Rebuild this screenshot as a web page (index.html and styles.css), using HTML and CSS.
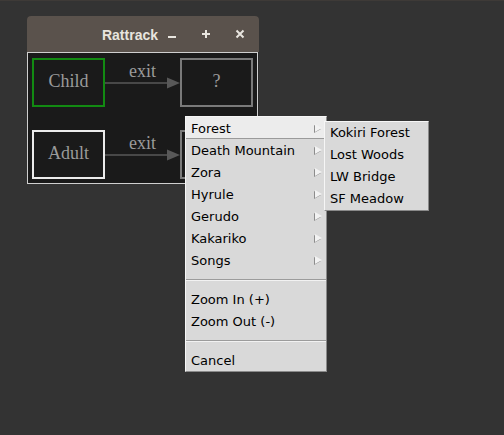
FILE: index.html
```html
<!DOCTYPE html>
<html lang="en">
<head>
    <meta charset="UTF-8">
    <title>Rattrack</title>
    <link rel="stylesheet" href="styles.css">
</head>
<body>
    <div class="window">
        <div class="titlebar">
            <span class="title">Rattrack</span>
            <span class="tb-btn">
                <svg width="10" height="10" viewBox="0 0 10 10"><rect x="1" y="7" width="8" height="2" fill="#e8e5df"/></svg>
            </span>
            <span class="tb-btn">
                <svg width="10" height="10" viewBox="0 0 10 10"><rect x="1" y="4" width="8" height="2" fill="#e8e5df"/><rect x="4" y="1" width="2" height="8" fill="#e8e5df"/></svg>
            </span>
            <span class="tb-btn">
                <svg width="10" height="10" viewBox="0 0 10 10"><path d="M1.5 1.5 L8.5 8.5 M8.5 1.5 L1.5 8.5" stroke="#e8e5df" stroke-width="2"/></svg>
            </span>
        </div>
        <div class="frame">
            <div class="row">
                <div class="node current">Child</div>
                <div class="edge">
                    <span class="edge-label">exit</span>
                    <svg width="75" height="12" viewBox="0 0 75 12"><line x1="0" y1="6" x2="63" y2="6" stroke="#585858" stroke-width="1.5"/><polygon points="62,0.5 75,6 62,11.5" fill="#585858"/></svg>
                </div>
                <div class="node unknown">?</div>
            </div>
            <div class="row">
                <div class="node selected">Adult</div>
                <div class="edge">
                    <span class="edge-label">exit</span>
                    <svg width="75" height="12" viewBox="0 0 75 12"><line x1="0" y1="6" x2="63" y2="6" stroke="#585858" stroke-width="1.5"/><polygon points="62,0.5 75,6 62,11.5" fill="#585858"/></svg>
                </div>
                <div class="node unknown">?</div>
            </div>
        </div>
    </div>

    <!-- context menu -->
    <div class="menu main-menu">
        <div class="item active">Forest <span class="cascade"></span></div>
        <div class="item">Death Mountain <span class="cascade"></span></div>
        <div class="item">Zora <span class="cascade"></span></div>
        <div class="item">Hyrule <span class="cascade"></span></div>
        <div class="item">Gerudo <span class="cascade"></span></div>
        <div class="item">Kakariko <span class="cascade"></span></div>
        <div class="item">Songs <span class="cascade"></span></div>
        <div class="separator"></div>
        <div class="item">Zoom In (+)</div>
        <div class="item">Zoom Out (-)</div>
        <div class="separator"></div>
        <div class="item">Cancel</div>
    </div>

    <div class="menu sub-menu">
        <div class="item">Kokiri Forest</div>
        <div class="item">Lost Woods</div>
        <div class="item">LW Bridge</div>
        <div class="item">SF Meadow</div>
    </div>
</body>
</html>
```

FILE: styles.css
```css
* {
    margin: 0;
    padding: 0;
    box-sizing: border-box;
}

body {
    background-color: #333333;
    border-top: 1px solid #3e3a37;
    height: 100vh;
    overflow: hidden;
    padding: 15px 0 0 27px;
    font-family: "DejaVu Sans", sans-serif;
}

.window {
    width: 232px;
    background-color: #2a2a2a;
    border-radius: 4px 4px 0 0;
}

.titlebar {
    height: 36px;
    background-color: #5a524c;
    border-radius: 4px 4px 0 0;
    display: flex;
    align-items: center;
    justify-content: flex-end;
    padding-right: 7px;
}

.title {
    font-family: "Liberation Sans", sans-serif;
    font-weight: bold;
    font-size: 14px;
    color: #e8e5df;
    margin-right: 2px;
    padding-top: 1px;
}

.tb-btn {
    width: 24px;
    height: 10px;
    display: flex;
    justify-content: center;
}

.tb-btn + .tb-btn {
    margin-left: 10px;
}

.tb-btn svg {
    display: block;
}

/* diagram area */
.frame {
    width: 231px;
    background-color: #1a1a1a;
    border: 1px solid #cfcfcf;
    padding: 5px 0 4px 4px;
    display: flex;
    flex-direction: column;
    gap: 23px;
}

.row {
    display: flex;
    height: 49px;
}

.node {
    width: 73px;
    height: 49px;
    border: 2px solid #7a7a7a;
    display: flex;
    align-items: center;
    justify-content: center;
    padding-bottom: 4px;
    font-family: "Liberation Serif", serif;
    font-size: 18px;
    line-height: 20px;
    color: #9a9a9a;
}

.node.current {
    border-color: #128a12;
}

.node.selected {
    border-color: #ebebeb;
}

.edge {
    width: 75px;
    display: flex;
    flex-direction: column;
    align-items: center;
}

.edge-label {
    margin-top: 3px;
    font-family: "Liberation Serif", serif;
    font-size: 18px;
    line-height: 20px;
    color: #9a9a9a;
}

.edge svg {
    display: block;
    margin-top: -4px;
}

/* popup menus */
.menu {
    position: absolute;
    background-color: #d9d9d9;
    border: 1px solid;
    border-color: #f6f6f6 #8a8a8a #8a8a8a #f6f6f6;
    font-size: 13px;
    color: #000;
}

.main-menu {
    left: 185px;
    top: 116px;
    width: 142px;
}

.sub-menu {
    left: 324px;
    top: 121px;
    width: 105px;
}

.item {
    position: relative;
    height: 22px;
    line-height: 15px;
    padding: 4px 0 3px 5px;
    white-space: nowrap;
}

.sub-menu .item {
    padding: 3px 0 4px 5px;
}

.item.active {
    background-color: #ececec;
    border-bottom: 1px solid #9a9a9a;
}

.cascade {
    position: absolute;
    right: 4px;
    top: 7px;
    width: 0;
    height: 0;
    border-top: 4px solid transparent;
    border-bottom: 4px solid transparent;
    border-left: 7px solid #f2f2f2;
    filter: drop-shadow(-1px 1px 0 #8c8c8c);
}

.separator {
    height: 17px;
    padding-top: 8px;
}

.separator::before {
    content: "";
    display: block;
    border-top: 1px solid #9c9c9c;
    border-bottom: 1px solid #f2f2f2;
}
```
